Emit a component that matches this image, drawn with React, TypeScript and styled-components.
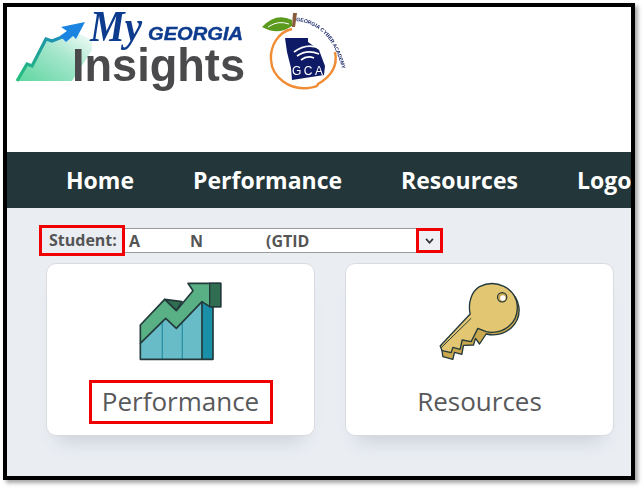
import React from "react";
import styled, { createGlobalStyle } from "styled-components";

const GlobalStyle = createGlobalStyle`
    html, body {
        margin: 0;
        height: 100%;
        overflow: hidden;
        background: #ffffff;
    }
    body {
        padding: 3px 0 0 3px;
        box-sizing: border-box;
        font-family: "Open Sans", "Liberation Sans", sans-serif;
    }
`;

const Frame = styled.div`
    width: 632px;
    height: 477px;
    box-sizing: border-box;
    border: 4px solid #000000;
    box-shadow: 3px 3px 4px rgba(0, 0, 0, 0.35);
    background: #eaeef3;
    overflow: hidden;
`;

const Header = styled.header`
    height: 145px;
    background: #ffffff;
    display: flex;
    align-items: flex-start;
    gap: 5px;
    padding: 3px 0 0 8px;
    box-sizing: border-box;
`;

const Logo = styled.svg`
    display: block;
    flex: none;
    filter: blur(0.35px);
`;

const Nav = styled.nav`
    height: 56px;
    background: #233639;
    display: flex;
    align-items: center;
    gap: 59px;
    padding-left: 59px;
    white-space: nowrap;
    overflow: hidden;
`;

const NavLink = styled.a`
    color: #ffffff;
    font-size: 23px;
    font-weight: 700;
`;

const Content = styled.main`
    padding: 20px 0 0 39px;
`;

const StudentRow = styled.div`
    display: flex;
    align-items: center;
    height: 25px;
    margin: 0 0 10px -4px;
    color: #555555;
    font-size: 16px;
    font-weight: 700;
`;

const StudentLabel = styled.label`
    width: 80px;
    height: 25px;
    line-height: 25px;
    box-sizing: border-box;
    padding-left: 7px;
    white-space: nowrap;
    outline: 3px solid #f00000;
`;

const Select = styled.div`
    display: flex;
    align-items: center;
    width: 315px;
    height: 25px;
    margin-left: 3px;
    box-sizing: border-box;
    background: #ffffff;
    border-top: 1px solid #9a9a9a;
    border-bottom: 1px solid #9a9a9a;
    position: relative;
`;

const NamePart = styled.span<{ $width: number }>`
    flex: none;
    width: ${(p) => p.$width}px;
    padding-left: 4px;
    box-sizing: border-box;
    font-size: 16px;
`;

const CaretBox = styled.span`
    position: absolute;
    right: 0;
    top: 2px;
    width: 21px;
    height: 19px;
    background: #eef0f3;
    display: flex;
    align-items: center;
    justify-content: center;
    outline: 3px solid #f00000;
`;

const Cards = styled.div`
    display: flex;
    gap: 30px;
`;

const Card = styled.section`
    width: 269px;
    height: 173px;
    box-sizing: border-box;
    background: #ffffff;
    border: 1px solid #d9dbe0;
    border-radius: 10px;
    box-shadow: 0 16px 18px -12px rgba(60, 70, 90, 0.2);
    display: flex;
    flex-direction: column;
    align-items: center;
    padding-top: 16px;
`;

const CardIcon = styled.svg`
    display: block;
    width: 85px;
    height: 82px;
`;

const CardLabel = styled.div<{ $marked?: boolean }>`
    width: 178px;
    height: 38px;
    margin-top: 21px;
    line-height: 36px;
    text-align: center;
    color: #58595b;
    font-size: 26px;
    outline: ${(p) => (p.$marked ? "3px solid #f00000" : "none")};
`;

const InsightsLogo = () => (
    <Logo width="240" height="90" viewBox="15 10 240 90">
        <defs>
            <linearGradient id="hill" x1="0" y1="1" x2="1" y2="0">
                <stop offset="0" stopColor="#5fd6a0" />
                <stop offset="0.55" stopColor="#a5e6cc" />
                <stop offset="1" stopColor="#ffffff" />
            </linearGradient>
            <linearGradient id="trend" x1="0" y1="1" x2="1" y2="0">
                <stop offset="0" stopColor="#25c07c" />
                <stop offset="0.6" stopColor="#1f9aa0" />
                <stop offset="1" stopColor="#1a84e0" />
            </linearGradient>
        </defs>
        <polygon points="17,81 27,65 32,67 46,40 52,42 62,37 72,30 92,40 92,50 72,81" fill="url(#hill)" />
        <polyline points="17,81 27,64 32,66 46,39 52,41 62,37 74,28" fill="none" stroke="url(#trend)" strokeWidth="3.2" />
        <polygon points="85,22 61,27 67,31 60,36 66,42 73,36 76,39" fill="#1a84e0" />
        <text x="90" y="41" fontFamily="Liberation Serif" fontStyle="italic" fontWeight="700" fontSize="44" fill="#0d3b8e" textLength="52" lengthAdjust="spacingAndGlyphs">My</text>
        <text x="148" y="40" fontFamily="Liberation Sans" fontStyle="italic" fontWeight="700" fontSize="18" fill="#0d3b8e" stroke="#0d3b8e" strokeWidth="0.4" textLength="95" lengthAdjust="spacingAndGlyphs">GEORGIA</text>
        <text x="72" y="81" fontFamily="Liberation Sans" fontWeight="700" fontSize="46" fill="#4a4a4c" textLength="173" lengthAdjust="spacingAndGlyphs">Insights</text>
    </Logo>
);

const AcademyLogo = () => (
    <Logo width="88" height="82" viewBox="260 10 88 82">
        <defs>
            <path id="rim" d="M296 21 Q330 24 342 68" />
        </defs>
        <path d="M262 27 Q276 12 292 20 L292 26 Q278 36 262 27 Z" fill="#5b9a1e" />
        <path d="M268 27 Q278 20 289 24" fill="none" stroke="#ffffff" strokeWidth="1" />
        <path d="M292 27 L293 13 L297 13 L295 27 Z" fill="#8a5a3c" />
        <path d="M292 29 C278 32 270 46 271 60 C272 78 290 90 308 88 C314 87 318 87 318 84 C332 76 338 66 335 52" fill="none" stroke="#f08c34" strokeWidth="2.4" />
        <polygon points="285,38 308,38 308,42 319,50 325,66 324,75 292,80 291,68 287,52" fill="#0e1a66" />
        <path d="M294 52 Q307 42 322 49 M297 56 Q307 49 319 54 M301 60 Q307 55 314 58" fill="none" stroke="#ffffff" strokeWidth="1.7" />
        <text x="292" y="75" fontFamily="Liberation Sans" fontSize="12" fill="#ffffff" textLength="31">GCA</text>
        <text fontFamily="Liberation Sans" fontWeight="700" fontSize="5.2" fill="#1c2a6b">
            <textPath href="#rim">GEORGIA CYBER ACADEMY</textPath>
        </text>
    </Logo>
);

const ChartIcon = () => (
    <CardIcon viewBox="330 60 255 246">
        <polygon points="337,250 413,175 445,205 522,125 522,298 337,298" fill="#68bcc8" />
        <polygon points="522,125 555,140 555,298 522,298" fill="#1a8fa8" />
        <path d="M403 185 V298 M463 188 V298" stroke="#2b93a5" strokeWidth="4" />
        <path d="M337 250 V298 H555 V140 M522 125 V298" fill="none" stroke="#23393b" strokeWidth="5" strokeLinejoin="round" />
        <polygon points="410,118 462,125 445,152" fill="#2f6e50" stroke="#23393b" strokeWidth="5" strokeLinejoin="round" />
        <polygon points="337,250 337,195 410,118 445,152 495,92 480,70 578,70 578,140 545,140 522,125 445,205 413,175" fill="#58b084" stroke="#23393b" strokeWidth="5" strokeLinejoin="round" />
        <rect x="545" y="70" width="33" height="70" fill="#2f6e50" stroke="#23393b" strokeWidth="4" />
    </CardIcon>
);

const KeyIcon = () => (
    <CardIcon viewBox="295 60 250 246">
        <path d="M397 170 L307 268 L310 290 L340 298 L345 277 L367 283 L372 256 L402 255 L408 235 L420 252 L440 222 C500 235 545 190 538 140 C530 90 480 72 435 85 Z" fill="#c9a84e" stroke="#23393b" strokeWidth="4" strokeLinejoin="round" />
        <path d="M392 162 L302 258 L308 272 L335 278 L340 262 L362 268 L368 240 L395 245 L415 205 L440 215 C490 225 538 190 533 135 C528 85 470 55 420 80 C395 95 385 130 392 162 Z" fill="#e3c672" stroke="#23393b" strokeWidth="4" strokeLinejoin="round" />
        <path d="M305 263 L395 175" stroke="#23393b" strokeWidth="3" />
        <circle cx="488" cy="112" r="14" fill="#c9a84e" stroke="#23393b" strokeWidth="3.5" />
        <circle cx="490" cy="114" r="8" fill="#ffffff" />
    </CardIcon>
);

const Caret = () => (
    <svg width="9" height="6" viewBox="0 0 10 7">
        <path d="M1 1 L5 5.5 L9 1" fill="none" stroke="#333333" strokeWidth="2" />
    </svg>
);

const App = () => {
    return (
        <>
            <GlobalStyle />
            <Frame>
                <Header>
                    <InsightsLogo />
                    <AcademyLogo />
                </Header>
                <Nav>
                    <NavLink>Home</NavLink>
                    <NavLink>Performance</NavLink>
                    <NavLink>Resources</NavLink>
                    <NavLink>Logout</NavLink>
                </Nav>
                <Content>
                    <StudentRow>
                        <StudentLabel>Student:</StudentLabel>
                        <Select>
                            <NamePart $width={61}>A</NamePart>
                            <NamePart $width={76}>N</NamePart>
                            <NamePart $width={152}>(GTID</NamePart>
                            <NamePart $width={8}>)</NamePart>
                            <CaretBox>
                                <Caret />
                            </CaretBox>
                        </Select>
                    </StudentRow>
                    <Cards>
                        <Card>
                            <ChartIcon />
                            <CardLabel $marked>Performance</CardLabel>
                        </Card>
                        <Card>
                            <KeyIcon />
                            <CardLabel>Resources</CardLabel>
                        </Card>
                    </Cards>
                </Content>
            </Frame>
        </>
    );
};

export default App;
